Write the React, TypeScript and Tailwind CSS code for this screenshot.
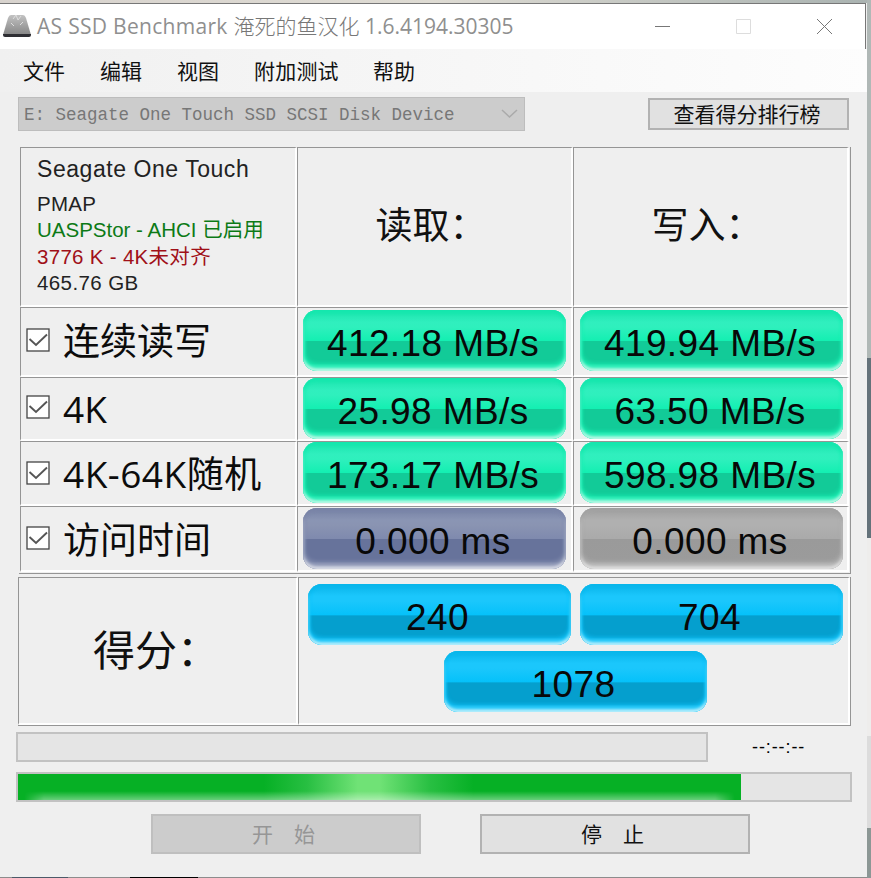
import { FC, ReactNode } from 'react';

const styles = {
  green:
    'bg-[linear-gradient(to_bottom,#18e4ac_0%,#30efbe_20%,#2ff0bd_28%,#14efb2_50%,#12cb98_51%,#12cb98_88%,#b5f8e4_97%)] shadow-[inset_0_3px_3px_#16e6ae,inset_0_-3px_3px_#b5f8e4,inset_0_-6px_4px_1px_#19efb3,inset_0_0_3px_2px_#19efb3]',
  navy: 'bg-[linear-gradient(to_bottom,#7580a4_0%,#8a95b4_20%,#8a94b2_28%,#7f8aae_50%,#67739b_51%,#67739b_88%,#d5d8e3_97%)] shadow-[inset_0_3px_3px_#7883a6,inset_0_-3px_3px_#d5d8e3,inset_0_-6px_4px_1px_#8791b2,inset_0_0_3px_2px_#8791b2]',
  gray: 'bg-[linear-gradient(to_bottom,#9d9d9d_0%,#b0b0b0_20%,#b0b0b0_28%,#aaaaaa_50%,#9a9a9a_51%,#9b9b9b_88%,#dddddd_97%)] shadow-[inset_0_3px_3px_#a0a0a0,inset_0_-3px_3px_#dddddd,inset_0_-6px_4px_1px_#b0b0b0,inset_0_0_3px_2px_#b0b0b0]',
  blue: 'bg-[linear-gradient(to_bottom,#08b3e8_0%,#1bc7fc_20%,#1bc7fc_28%,#05c1fa_51%,#059fce_52%,#059fce_88%,#b2edfc_97%)] shadow-[inset_0_3px_3px_#0ab6ea,inset_0_-3px_3px_#b2edfc,inset_0_-6px_4px_1px_#12c4fa,inset_0_0_3px_2px_#12c4fa]',
};

interface PillProps {
  color: keyof typeof styles;
  children: ReactNode;
}

const Pill: FC<PillProps> = ({ color, children }) => (
  <div
    className={`flex h-[61px] w-[263px] shrink-0 items-center justify-center rounded-[14px] pt-[5px] pr-[3px] text-[37px] leading-none tracking-[0.4px] whitespace-nowrap text-[#080808] ${styles[color]}`}
  >
    {children}
  </div>
);

const cell = 'border-t border-l border-t-[#959595] border-l-[#959595] border-r-2 border-b-2 border-r-white border-b-white';

const Check: FC = () => (
  <svg className="size-6 shrink-0" viewBox="0 0 24 24" fill="none">
    <rect x="1" y="1" width="22" height="22" fill="#fff" stroke="#444" strokeWidth="1.3" />
    <path d="M3.500 11l6.500 6L21 6.500" stroke="#555" strokeWidth="1.9" />
  </svg>
);

interface Row {
  label: string;
  read: string;
  write: string;
  readColor: keyof typeof styles;
  writeColor: keyof typeof styles;
  cellClass: string;
  labelClass: string;
  pillClass: string;
}

const rows: Row[] = [
  { label: '连续读写', read: '412.18 MB/s', write: '419.94 MB/s', readColor: 'green', writeColor: 'green', cellClass: 'pb-[3px]', labelClass: '', pillClass: 'pt-[2px]' },
  { label: '4K', read: '25.98 MB/s', write: '63.50 MB/s', readColor: 'green', writeColor: 'green', cellClass: 'pb-[3px]', labelClass: 'pt-[2px]', pillClass: 'pt-0' },
  { label: '4K-64K随机', read: '173.17 MB/s', write: '598.98 MB/s', readColor: 'green', writeColor: 'green', cellClass: 'pb-px', labelClass: 'pt-[2px] tracking-[0.5px]', pillClass: 'pt-0' },
  { label: '访问时间', read: '0.000 ms', write: '0.000 ms', readColor: 'navy', writeColor: 'gray', cellClass: 'pb-px', labelClass: 'pt-[3px]', pillClass: 'pt-px' },
];

const TitleBar: FC = () => (
  <header className="flex h-[46px] w-[866px] items-center border-t border-r border-[#777] bg-white pl-[3px]">
    <svg className="h-[25px] w-[28px]" viewBox="0 0 28 25">
      <defs>
        <linearGradient id="drive" x1="0" y1="0" x2="0" y2="1">
          <stop offset="0" stopColor="#c2c2c2" />
          <stop offset="1" stopColor="#858585" />
        </linearGradient>
      </defs>
      <path d="M8 1h12q2 0 3 3l5 17H0L5 4q1-3 3-3z" fill="url(#drive)" />
      <path d="M0 20h28v1q0 2-2 2H2q-2 0-2-2z" fill="#2e2e33" />
      <path d="M10 5l3-4 2 5 3-4M8 9l3 3M20 8l-3 3" stroke="#dedede" fill="none" />
    </svg>
    <h1 className="ml-[6px] w-[490px] text-[21px] leading-none whitespace-nowrap text-[#8f8f8f] font-['Open_Sans','Noto_Sans_CJK_SC',sans-serif]">
      <span className="tracking-[0.3px]">AS SSD Benchmark </span>
      <span className="font-light text-[#777]">淹死的鱼汉化</span> 1.6.4194.30305
    </h1>
    <svg className="ml-auto mr-[31px] h-[18px] w-[180px]" viewBox="0 0 180 18" fill="none">
      <path d="M1 8.5h15" stroke="#777" />
      <path d="M82.500 1.500h14v14h-14z" stroke="#ddd" />
      <path d="M163 1l15 15M178 1l-15 15" stroke="#777" />
    </svg>
  </header>
);

const Menu: FC = () => (
  <nav className="flex h-[43px] shrink-0 items-center bg-linear-to-r from-[#f0f0f0] to-[#fdfdfd] pl-[23px] text-[21px] leading-none text-[#111] font-['Noto_Sans_CJK_SC',sans-serif]">
    <span className="w-[77px]">文件</span>
    <span className="w-[77px]">编辑</span>
    <span className="w-[77px]">视图</span>
    <span className="w-[119px] tracking-[0.2px]">附加测试</span>
    <span>帮助</span>
  </nav>
);

const DriveInfo: FC = () => (
  <div className={`${cell} pt-[8px] pl-[16px] text-[20.5px] leading-[26.5px] whitespace-nowrap text-[#222]`}>
    <div className="mb-[8px] text-[23px] tracking-[0.55px]">Seagate One Touch</div>
    <div className="tracking-[0.3px]">PMAP</div>
    <div className="text-[#0c7a16]">UASPStor - AHCI 已启用</div>
    <div className="tracking-[0.3px] text-[#a01018]">3776 K - 4K未对齐</div>
    <div className="tracking-[0.4px]">465.76 GB</div>
  </div>
);

export default function App() {
  return (
    <div className="flex h-[878px] w-[871px] overflow-hidden bg-[#efefef] font-['Liberation_Sans','Noto_Sans_CJK_SC',sans-serif]">
      <div className="flex w-[867px] shrink-0 flex-col">
        <div className="h-[3px] shrink-0 bg-linear-to-r from-[#d8d3ce] via-[#dedbd3] to-[#aab3b1]" />
        <TitleBar />
        <Menu />

        <div className="flex h-[55px] shrink-0 items-start justify-between pt-[5px] pr-[18px] pl-[18px]">
          <div className="flex h-[34px] w-[507px] items-center justify-between border border-[#bdbdbd] bg-[#ccc] pr-[6px] pl-[5px] text-[#777]">
            <span className="pt-[3px] text-[17.500px] leading-none whitespace-pre font-['Liberation_Mono',monospace]">
              E: Seagate One Touch SSD SCSI Disk Device
            </span>
            <svg className="h-[10px] w-[17px]" viewBox="0 0 17 10" fill="none">
              <path d="M1 1l7.500 7L16 1" stroke="#aaa" strokeWidth="1.500" />
            </svg>
          </div>
          <button className="mt-[1px] h-[32px] w-[201px] border-2 border-[#b2b2b2] bg-[#e1e1e1] pr-[3px] text-[21px] leading-none text-[#111]">
            查看得分排行榜
          </button>
        </div>

        <main className="ml-[19px] grid h-[427px] w-[832px] shrink-0 grid-cols-[277px_276px_276px] grid-rows-[160px_70px_64px_65px_66px] border-r border-b border-[#959595] pl-px">
          <DriveInfo />
          <div className={`${cell} flex items-center justify-center pr-[7px] text-[37px] text-[#111]`}>读取：</div>
          <div className={`${cell} flex items-center justify-center pr-[7px] text-[37px] text-[#111]`}>写入：</div>
          {rows.map((row) => (
            <div key={row.label} className="contents">
              <div className={`${cell} flex items-center gap-[13px] pl-[5px] text-[37px] leading-none whitespace-nowrap text-[#0c0c0c] ${row.cellClass}`}>
                <Check />
                <span className={`font-['Open_Sans','Noto_Sans_CJK_SC',sans-serif] ${row.labelClass}`}>{row.label}</span>
              </div>
              <div className={`${cell} flex items-start pl-[5px] ${row.pillClass}`}>
                <Pill color={row.readColor}>{row.read}</Pill>
              </div>
              <div className={`${cell} flex items-start pl-[6px] ${row.pillClass}`}>
                <Pill color={row.writeColor}>{row.write}</Pill>
              </div>
            </div>
          ))}
        </main>

        <section className="mt-[3px] ml-[18px] grid h-[149px] w-[833px] shrink-0 grid-cols-[280px_552px] border-r border-b border-[#959595]">
          <div className={`${cell} flex items-center justify-center pt-[2px] pr-[3px] text-[42px] text-[#111]`}>得分：</div>
          <div className={`${cell} flex flex-col items-center gap-[6px] pt-[6px] pl-[3px]`}>
            <div className="flex gap-[9px]">
              <Pill color="blue">240</Pill>
              <Pill color="blue">704</Pill>
            </div>
            <Pill color="blue">1078</Pill>
          </div>
        </section>

        <div className="mt-[6px] ml-[16px] flex h-[30px] shrink-0 items-center">
          <div className="h-[30px] w-[692px] border-2 border-[#c2c2c2] bg-[#e5e5e5]" />
          <span className="ml-[44px] text-[18px] leading-none tracking-[0.9px] text-black">--:--:--</span>
        </div>

        <div className="mt-[10px] ml-[16px] h-[30px] w-[836px] shrink-0 border-2 border-[#c2c2c2] bg-[#e5e5e5]">
          <div className="flex h-full w-[723px] flex-col justify-end bg-[linear-gradient(to_right,#06b025_0%,#06b025_34%,#28bf42_40%,#70e276_47%,#70e276_50%,#28bf42_57%,#06b025_63%,#06b025_100%)]">
            <div className="mx-[6px] h-[9px] bg-linear-to-b from-transparent to-white/40 mask-[linear-gradient(to_right,transparent,black_20px,black_691px,transparent)]" />
          </div>
        </div>

        <div className="mt-[12px] ml-[151px] flex gap-[59px] text-[21px] leading-none">
          <button className="flex h-[40px] w-[270px] items-center justify-center gap-[21px] border-2 border-[#bfbfbf] bg-[#ccc] pr-[5px] text-[#969696]">
            <span>开</span>
            <span>始</span>
          </button>
          <button className="flex h-[40px] w-[270px] items-center justify-center gap-[21px] border-2 border-[#b2b2b2] bg-[#e1e1e1] pr-[5px] text-[#111]">
            <span>停</span>
            <span>止</span>
          </button>
        </div>
        <div className="mt-auto flex h-px bg-[#8c8c8c]">
          <div className="ml-[12px] w-[56px] bg-[#4c5a68]" />
          <div className="ml-[62px] w-[68px] bg-black" />
        </div>
      </div>

      {/* desktop behind the window */}
      <div className="flex w-[4px] flex-col">
        <div className="h-[358px] bg-[#b0b8b6]" />
        <div className="h-[180px] bg-[#64727a]" />
        <div className="h-[198px] bg-[#eeedec]" />
        <div className="h-[92px] bg-[#dcdcdc]" />
        <div className="h-[50px] bg-[#8c9795]" />
      </div>
    </div>
  );
}
